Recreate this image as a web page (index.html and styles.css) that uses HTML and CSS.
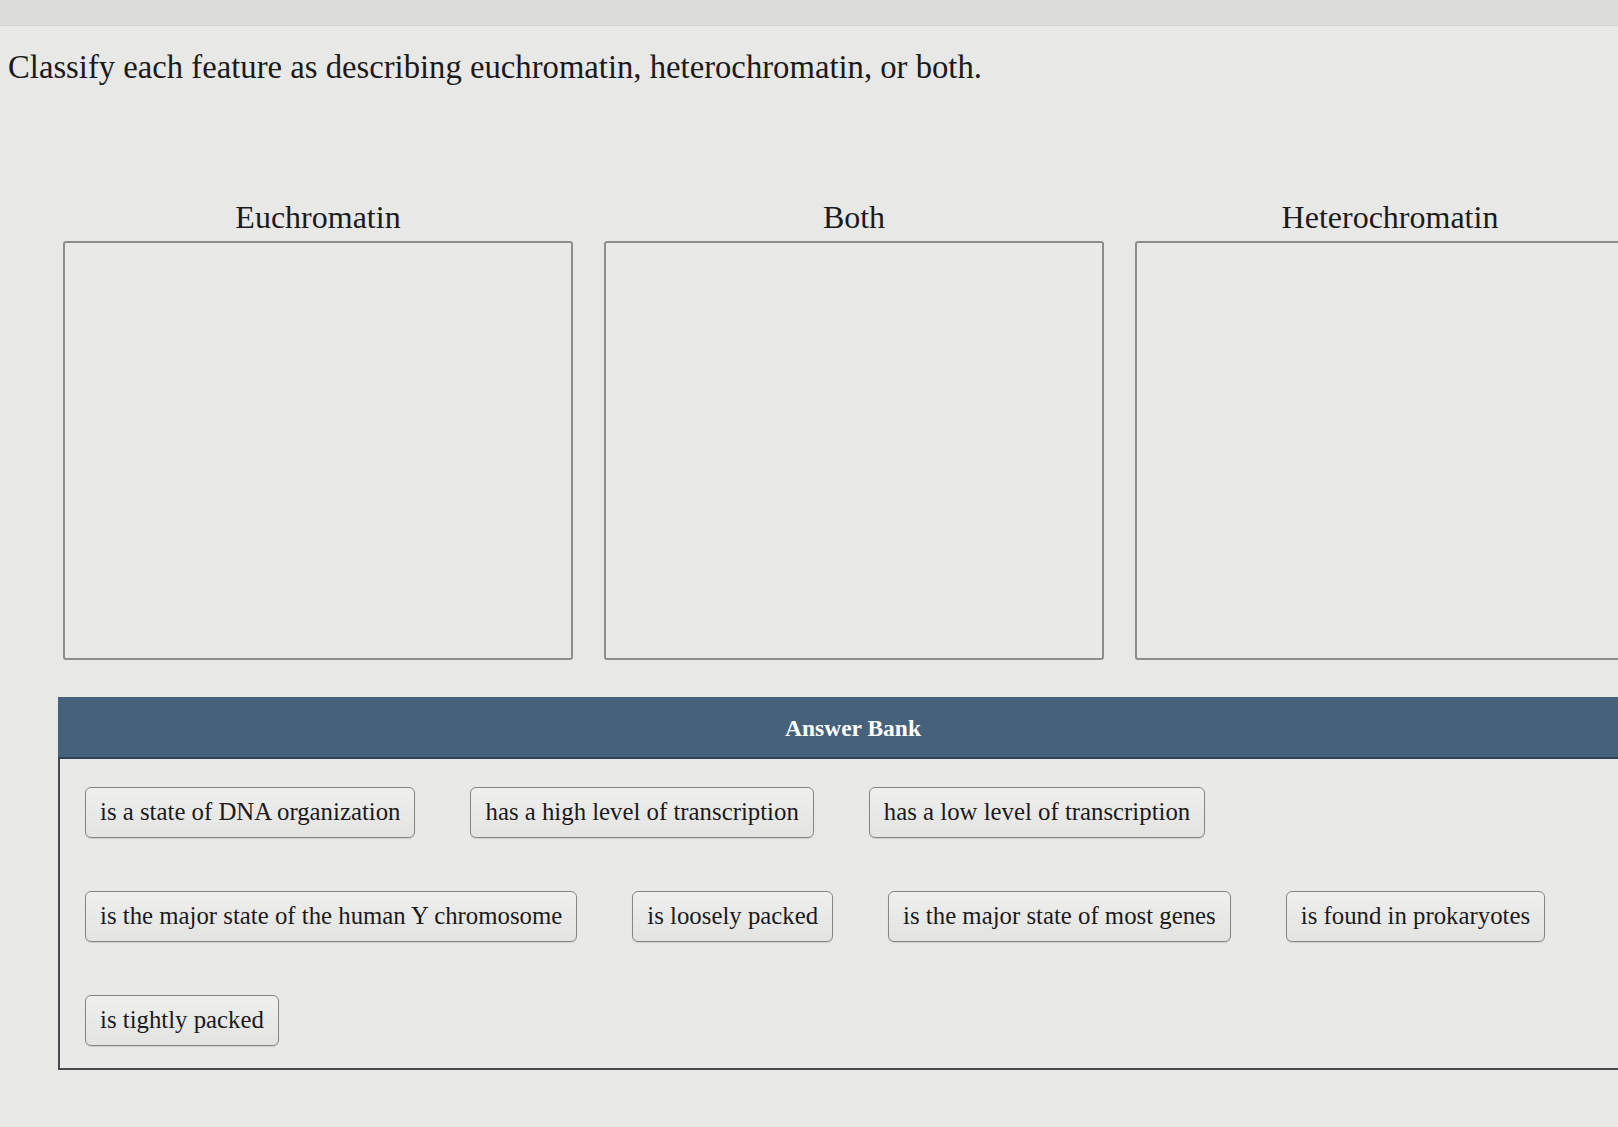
FILE: index.html
```html
<!DOCTYPE html>
<html lang="en">
<head>
<meta charset="utf-8">
<title>Classify chromatin features</title>
<link rel="stylesheet" href="styles.css">
</head>
<body>
  <div class="topbar"></div>
  <h1 class="prompt">Classify each feature as describing euchromatin, heterochromatin, or both.</h1>

  <div class="targets">
    <section class="target">
      <h2 class="target-label">Euchromatin</h2>
      <div class="dropzone"></div>
    </section>
    <section class="target">
      <h2 class="target-label">Both</h2>
      <div class="dropzone"></div>
    </section>
    <section class="target">
      <h2 class="target-label">Heterochromatin</h2>
      <div class="dropzone"></div>
    </section>
  </div>

  <div class="bank">
    <div class="bank-head">Answer Bank</div>
    <div class="bank-body">
      <div class="chip">is a state of DNA organization</div>
      <div class="chip">has a high level of transcription</div>
      <div class="chip">has a low level of transcription</div>
      <div class="chip">is the major state of the human Y chromosome</div>
      <div class="chip">is loosely packed</div>
      <div class="chip">is the major state of most genes</div>
      <div class="chip">is found in prokaryotes</div>
      <div class="chip">is tightly packed</div>
    </div>
  </div>
</body>
</html>
```

FILE: styles.css
```css
html, body {
  margin: 0;
  padding: 0;
}

body {
  background: #e8e8e6;
  color: #1b1a1c;
  font-family: "Liberation Serif", "Times New Roman", serif;
  overflow: hidden;
  width: 1618px;
  height: 1127px;
}

.topbar {
  height: 25px;
  background: #dcdcda;
  border-bottom: 1px solid #d3d3d1;
}

.prompt {
  margin: 23px 0 0 8px;
  font-size: 32.7px;
  font-weight: normal;
  line-height: 37px;
  white-space: nowrap;
}

.targets {
  display: grid;
  grid-template-columns: 510px 500px 510px;
  column-gap: 31px;
  margin: 113px 0 0 63px;
  width: 1600px;
}

.target {
  display: flex;
  flex-direction: column;
}

.target-label {
  margin: 0 0 6px;
  text-align: center;
  font-size: 32px;
  font-weight: normal;
  line-height: 36px;
}

.dropzone {
  height: 415px;
  border: 2px solid #8d8d8c;
  border-radius: 3px;
  background: #e9e9e7;
}

.bank {
  margin: 37px 0 0 58px;
  width: 1590px;
}

.bank-head {
  height: 60px;
  background: #46617c;
  border-bottom: 2px solid #2f4357;
  color: #ffffff;
  font-size: 23.5px;
  font-weight: bold;
  line-height: 62px;
  text-align: center;
}

.bank-body {
  display: flex;
  flex-wrap: wrap;
  column-gap: 55px;
  row-gap: 53px;
  align-content: flex-start;
  padding: 28px 20px 20px 25px;
  min-height: 261px;
  border-left: 2px solid #4a4a4c;
  border-bottom: 2px solid #4a4a4c;
  background: #e9e9e7;
}

.chip {
  padding: 10px 14px 11px;
  font-size: 24.8px;
  line-height: 28px;
  border: 1.5px solid #868686;
  border-radius: 6px;
  background: linear-gradient(#efefed, #e3e3e1);
  box-shadow: 0 1px 1px rgba(0, 0, 0, 0.12);
  white-space: nowrap;
}
```
